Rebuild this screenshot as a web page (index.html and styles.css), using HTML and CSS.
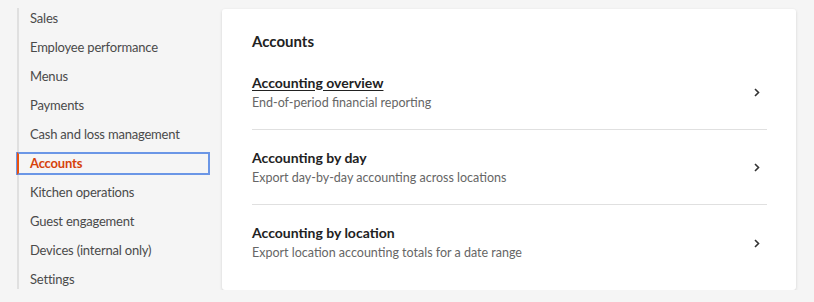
FILE: index.html
```html
<!DOCTYPE html>
<html lang="en">
<head>
  <meta charset="UTF-8">
  <title>Accounts</title>
  <link rel="stylesheet" href="styles.css">
</head>
<body>
  <div class="page">
    <ul class="side-nav">
      <li class="nav-item">Sales</li>
      <li class="nav-item">Employee performance</li>
      <li class="nav-item">Menus</li>
      <li class="nav-item">Payments</li>
      <li class="nav-item">Cash and loss management</li>
      <li class="nav-item active">Accounts</li>
      <li class="nav-item">Kitchen operations</li>
      <li class="nav-item">Guest engagement</li>
      <li class="nav-item">Devices (internal only)</li>
      <li class="nav-item">Settings</li>
    </ul>

    <div class="card">
      <h2 class="card-title">Accounts</h2>

      <div class="report-row">
        <div class="report-text">
          <div class="report-name underline">Accounting overview</div>
          <div class="report-desc">End-of-period financial reporting</div>
        </div>
        <svg class="chevron" width="6" height="9" viewBox="0 0 6 9"><path d="M1 1l3.5 3.5L1 8" fill="none" stroke="#333" stroke-width="1.6"/></svg>
      </div>

      <div class="report-row">
        <div class="report-text">
          <div class="report-name">Accounting by day</div>
          <div class="report-desc">Export day-by-day accounting across locations</div>
        </div>
        <svg class="chevron" width="6" height="9" viewBox="0 0 6 9"><path d="M1 1l3.5 3.5L1 8" fill="none" stroke="#333" stroke-width="1.6"/></svg>
      </div>

      <div class="report-row">
        <div class="report-text">
          <div class="report-name">Accounting by location</div>
          <div class="report-desc">Export location accounting totals for a date range</div>
        </div>
        <svg class="chevron" width="6" height="9" viewBox="0 0 6 9"><path d="M1 1l3.5 3.5L1 8" fill="none" stroke="#333" stroke-width="1.6"/></svg>
      </div>
    </div>
  </div>
</body>
</html>
```

FILE: styles.css
```css
body {
  margin: 0;
  padding: 0;
  background: #f5f5f5;
  font-family: 'Lato', 'Noto Sans', sans-serif;
  color: #333;
}

.page {
  display: flex;
  align-items: flex-start;
  padding: 8px 18px 0 17px;
}

.side-nav {
  list-style: none;
  margin: 0;
  padding: 0;
  width: 191px;
  flex-shrink: 0;
  border-left: 2px solid #e0e0e0;
}

.nav-item {
  height: 29px;
  line-height: 20px;
  padding-left: 11px;
  padding-bottom: 9px;
  font-size: 13px;
  letter-spacing: -0.2px;
  color: #4a4a4a;
  box-sizing: border-box;
}

.nav-item:last-child {
  height: 20px;
  padding-bottom: 0;
}

.nav-item.active {
  height: 23px;
  line-height: 19px;
  padding-bottom: 0;
  margin: -1px 0 7px -2px;
  padding-left: 11px;
  color: #d6420b;
  font-weight: bold;
  border: 2px solid #6b96e6;
  border-left: 2px solid #e8510f;
  box-shadow: -1px 0 0 #6b96e6;
}

.card {
  margin-left: 12px;
  width: 574px;
  height: 281px;
  box-sizing: border-box;
  background: #fff;
  border-radius: 3px;
  box-shadow: 0 1px 3px rgba(0, 0, 0, 0.15);
  padding: 22px 29px 0 30px;
  margin-top: 1px;
}

.card-title {
  margin: 0 0 4px 0;
  font-size: 15px;
  line-height: 20px;
  font-weight: bold;
  color: #222;
}

.report-row {
  display: flex;
  align-items: center;
  justify-content: space-between;
  height: 75px;
  box-sizing: border-box;
  padding: 18px 7px 17px 0;
  border-bottom: 1px solid #e0e0e0;
}

.report-row:last-child {
  border-bottom: none;
}

.report-name {
  font-size: 14px;
  font-weight: bold;
  line-height: 20px;
  color: #222;
}

.report-name.underline {
  text-decoration: underline;
  text-underline-offset: 2px;
}

.report-desc {
  font-size: 12.5px;
  line-height: 20px;
  color: #666;
}

.chevron {
  display: block;
}
```
